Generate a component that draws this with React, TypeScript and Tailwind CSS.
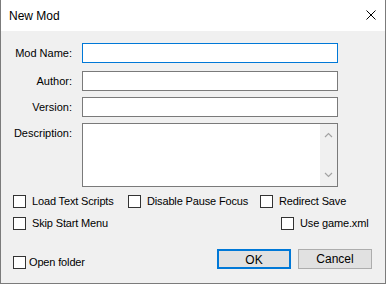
import React from 'react'

function CheckBox({ label, gap = 'ml-[6px]' }: { label: string; gap?: string }) {
  return (
    <label className="flex items-center">
      <span className="h-[13px] w-[13px] shrink-0 border border-[#333333] bg-white" />
      <span className={`${gap} leading-[13px] tracking-[-0.15px]`}>{label}</span>
    </label>
  )
}

function Field({ label, focused = false, top }: { label: string; focused?: boolean; top: string }) {
  return (
    <div className={`flex items-center ${top}`}>
      <span className="w-[71px] text-right leading-[13px]">{label}</span>
      <div
        className={`ml-[10px] h-[20px] w-[256px] border bg-white ${
          focused ? 'border-[#0078d7]' : 'border-[#7a7a7a]'
        }`}
      />
    </div>
  )
}

export default function App() {
  return (
    <div
      className="flex h-[284px] w-[386px] flex-col border-x border-b border-[#7b7b7b] text-[11px] text-black"
      style={{ fontFamily: '"Liberation Sans", Arial, sans-serif' }}
    >
      {/* Title bar */}
      <div className="flex h-[31px] shrink-0 items-center justify-between bg-white pl-[8px] pr-[9px]">
        <span className="text-[12px]">New Mod</span>
        <svg width="10" height="10" viewBox="0 0 10 10" className="mb-[1px]">
          <path d="M0.5 0.5L9.5 9.5M9.5 0.5L0.5 9.5" stroke="#000" strokeWidth="1" />
        </svg>
      </div>

      {/* Body */}
      <div className="flex flex-1 flex-col bg-[#f0f0f0]">
        <Field label="Mod Name:" focused top="mt-[12px]" />
        <Field label="Author:" top="mt-[8px]" />
        <Field label="Version:" top="mt-[6px]" />

        <div className="mt-[6px] flex items-start">
          <span className="w-[71px] pt-[4px] text-right leading-[13px]">Description:</span>
          <div className="ml-[10px] flex h-[64px] w-[256px] border border-[#7a7a7a] bg-white">
            <div className="flex-1" />
            <div className="flex w-[17px] flex-col items-center justify-between bg-[#f0f0f0] py-[8px]">
              <svg width="9" height="6" viewBox="0 0 9 6">
                <path d="M1 5L4.5 1.5L8 5" fill="none" stroke="#a3a3a3" strokeWidth="1.2" />
              </svg>
              <svg width="9" height="6" viewBox="0 0 9 6">
                <path d="M1 1L4.5 4.5L8 1" fill="none" stroke="#a3a3a3" strokeWidth="1.2" />
              </svg>
            </div>
          </div>
        </div>

        {/* Options */}
        <div className="mt-[8px] flex pl-[12px]">
          <div className="w-[115px]">
            <CheckBox label="Load Text Scripts" />
          </div>
          <div className="w-[132px]">
            <CheckBox label="Disable Pause Focus" />
          </div>
          <CheckBox label="Redirect Save" />
        </div>
        <div className="mt-[9px] flex pl-[12px]">
          <div className="w-[268px]">
            <CheckBox label="Skip Start Menu" />
          </div>
          <CheckBox label="Use game.xml" />
        </div>

        {/* Footer */}
        <div className="mt-[19px] flex items-end pl-[12px]">
          <CheckBox label="Open folder" gap="ml-[3px]" />
          <div className="ml-auto mr-[13px] flex gap-[7px]">
            <button className="h-[20px] w-[74px] border-2 border-[#0078d7] bg-[#e1e1e1] text-[12px]">
              OK
            </button>
            <button className="h-[20px] w-[74px] border border-[#adadad] bg-[#e1e1e1] text-[12px]">
              Cancel
            </button>
          </div>
        </div>
      </div>
    </div>
  )
}
